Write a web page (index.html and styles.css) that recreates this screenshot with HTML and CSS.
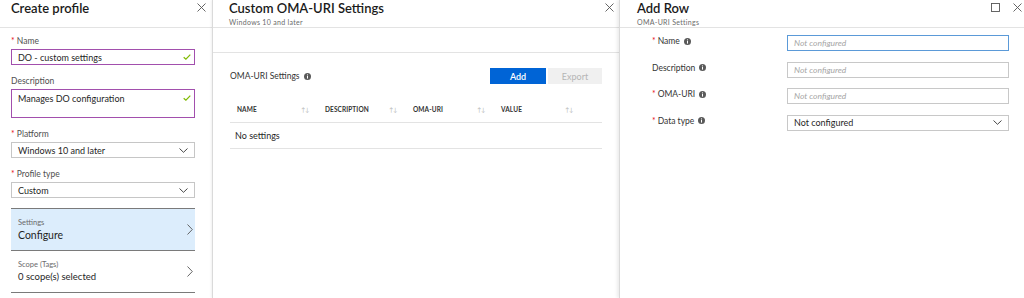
FILE: index.html
```html
<!DOCTYPE html>
<html lang="en">
<head>
<meta charset="utf-8">
<title>Create profile</title>
<link rel="stylesheet" href="styles.css">
</head>
<body>
<div class="app">

  <section class="blade blade-create">
    <header class="bhead">
      <div class="titles"><div class="btitle">Create profile</div></div>
      <div class="bicons">
        <svg class="ico" width="9" height="9" viewBox="0 0 9 9"><path d="M0.5 0.5L8.5 8.5M8.5 0.5L0.5 8.5" stroke="#555" stroke-width="0.9" fill="none"/></svg>
      </div>
    </header>
    <div class="cform">
      <div class="field">
        <div class="flabel"><span class="req">*</span> Name</div>
        <div class="inp inp-valid"><span class="val">DO - custom settings</span>
          <svg class="check" width="8" height="6" viewBox="0 0 8 6"><path d="M0.7 3.2L2.9 5.2L7.3 0.7" stroke="#7fba00" stroke-width="1.2" fill="none"/></svg>
        </div>
      </div>
      <div class="field">
        <div class="flabel">Description</div>
        <div class="inp inp-valid inp-area"><span class="val">Manages DO configuration</span>
          <svg class="check" width="8" height="6" viewBox="0 0 8 6"><path d="M0.7 3.2L2.9 5.2L7.3 0.7" stroke="#7fba00" stroke-width="1.2" fill="none"/></svg>
        </div>
      </div>
      <div class="field">
        <div class="flabel"><span class="req">*</span> Platform</div>
        <div class="inp sel"><span class="val">Windows 10 and later</span>
          <svg class="chev" width="9" height="5" viewBox="0 0 9 5"><path d="M0.5 0.5L4.5 4.3L8.5 0.5" stroke="#333" stroke-width="0.9" fill="none"/></svg>
        </div>
      </div>
      <div class="field">
        <div class="flabel"><span class="req">*</span> Profile type</div>
        <div class="inp sel"><span class="val">Custom</span>
          <svg class="chev" width="9" height="5" viewBox="0 0 9 5"><path d="M0.5 0.5L4.5 4.3L8.5 0.5" stroke="#333" stroke-width="0.9" fill="none"/></svg>
        </div>
      </div>
      <div class="cards">
        <div class="navcard active">
          <div class="navtext">
            <div class="navsub">Settings</div>
            <div class="navmain">Configure</div>
          </div>
          <svg class="navchev" width="6" height="11" viewBox="0 0 6 11"><path d="M0.5 0.5L5.3 5.5L0.5 10.5" stroke="#555" stroke-width="0.9" fill="none"/></svg>
        </div>
        <div class="navcard">
          <div class="navtext">
            <div class="navsub">Scope (Tags)</div>
            <div class="navmain navmain-s">0 scope(s) selected</div>
          </div>
          <svg class="navchev" width="6" height="11" viewBox="0 0 6 11"><path d="M0.5 0.5L5.3 5.5L0.5 10.5" stroke="#555" stroke-width="0.9" fill="none"/></svg>
        </div>
      </div>
    </div>
  </section>

  <section class="blade blade-oma">
    <header class="bhead bhead-mid">
      <div class="titles">
        <div class="btitle">Custom OMA-URI Settings</div>
        <div class="bsub">Windows 10 and later</div>
      </div>
      <div class="bicons">
        <svg class="ico" width="9" height="9" viewBox="0 0 9 9"><path d="M0.5 0.5L8.5 8.5M8.5 0.5L0.5 8.5" stroke="#555" stroke-width="0.9" fill="none"/></svg>
      </div>
    </header>
    <div class="toolbar"></div>
    <div class="omacontent">
      <div class="omarow">
        <div class="omalabel">OMA-URI Settings
          <svg class="info" width="7" height="7" viewBox="0 0 7 7"><circle cx="3.5" cy="3.5" r="3.5" fill="#5a5a5a"/><rect x="3" y="3" width="1" height="2.6" fill="#fff"/><rect x="3" y="1.4" width="1" height="1" fill="#fff"/></svg>
        </div>
        <div class="btns">
          <div class="btn btn-primary">Add</div>
          <div class="btn btn-disabled">Export</div>
        </div>
      </div>
      <div class="table">
        <div class="thead">
          <div class="th"><span>NAME</span><span class="sort">↑↓</span></div>
          <div class="th"><span>DESCRIPTION</span><span class="sort">↑↓</span></div>
          <div class="th"><span>OMA-URI</span><span class="sort">↑↓</span></div>
          <div class="th"><span>VALUE</span><span class="sort">↑↓</span></div>
        </div>
        <div class="trow">No settings</div>
      </div>
    </div>
  </section>

  <section class="blade blade-add">
    <header class="bhead bhead-add">
      <div class="titles">
        <div class="btitle">Add Row</div>
        <div class="bsub">OMA-URI Settings</div>
      </div>
      <div class="bicons bicons-2">
        <svg class="ico" width="9" height="9" viewBox="0 0 9 9"><rect x="0.5" y="0.5" width="8" height="8" stroke="#555" stroke-width="0.9" fill="none"/></svg>
        <svg class="ico" width="9" height="9" viewBox="0 0 9 9"><path d="M0.5 0.5L8.5 8.5M8.5 0.5L0.5 8.5" stroke="#555" stroke-width="0.9" fill="none"/></svg>
      </div>
    </header>
    <div class="rform">
      <div class="rlabel"><span class="req">*</span> Name
        <svg class="info" width="7" height="7" viewBox="0 0 7 7"><circle cx="3.5" cy="3.5" r="3.5" fill="#5a5a5a"/><rect x="3" y="3" width="1" height="2.6" fill="#fff"/><rect x="3" y="1.4" width="1" height="1" fill="#fff"/></svg>
      </div>
      <div class="rinp rinp-focus"><span class="ph">Not configured</span></div>

      <div class="rlabel">Description
        <svg class="info" width="7" height="7" viewBox="0 0 7 7"><circle cx="3.5" cy="3.5" r="3.5" fill="#5a5a5a"/><rect x="3" y="3" width="1" height="2.6" fill="#fff"/><rect x="3" y="1.4" width="1" height="1" fill="#fff"/></svg>
      </div>
      <div class="rinp"><span class="ph">Not configured</span></div>

      <div class="rlabel"><span class="req">*</span> OMA-URI
        <svg class="info" width="7" height="7" viewBox="0 0 7 7"><circle cx="3.5" cy="3.5" r="3.5" fill="#5a5a5a"/><rect x="3" y="3" width="1" height="2.6" fill="#fff"/><rect x="3" y="1.4" width="1" height="1" fill="#fff"/></svg>
      </div>
      <div class="rinp"><span class="ph">Not configured</span></div>

      <div class="rlabel"><span class="req">*</span> Data type
        <svg class="info" width="7" height="7" viewBox="0 0 7 7"><circle cx="3.5" cy="3.5" r="3.5" fill="#5a5a5a"/><rect x="3" y="3" width="1" height="2.6" fill="#fff"/><rect x="3" y="1.4" width="1" height="1" fill="#fff"/></svg>
      </div>
      <div class="rinp rsel"><span class="rval">Not configured</span>
        <svg class="chev" width="9" height="5" viewBox="0 0 9 5"><path d="M0.5 0.5L4.5 4.3L8.5 0.5" stroke="#333" stroke-width="0.9" fill="none"/></svg>
      </div>
    </div>
  </section>

</div>
</body>
</html>
```

FILE: styles.css
```css
* { box-sizing: border-box; }
html, body { margin: 0; padding: 0; background: #fff; }
body {
  width: 1024px;
  height: 298px;
  overflow: hidden;
  font-family: Lato, "Open Sans", sans-serif;
  color: #1f1f1f;
}
.app {
  display: flex;
  height: 298px;
}
.blade {
  height: 298px;
  background: #fff;
  position: relative;
}
.blade-create { width: 212px; flex: none; }
.blade-oma {
  width: 407px;
  flex: none;
  border-left: 1px solid #dadada;
  box-shadow: -1px 0 2px rgba(0,0,0,0.06);
}
.blade-add {
  flex: 1;
  border-left: 1px solid #dadada;
  box-shadow: -2px 0 3px rgba(0,0,0,0.08);
}

/* headers */
.bhead {
  height: 28px;
  border-bottom: 1px solid #e3e3e3;
  display: flex;
  justify-content: space-between;
  align-items: flex-start;
  padding: 0 6px 0 11px;
}
.bhead.bhead-mid { padding: 0 5px 0 16px; }
.bhead.bhead-add { padding: 0 2px 0 17px; }
.titles { margin: 0; padding: 0; flex: none; }
.btitle {
  margin: 0;
  font-size: 13px;
  line-height: 16px;
  font-weight: 600;
  color: #1b1b1b;
  white-space: nowrap;
}
.bsub {
  font-size: 7px;
  line-height: 8px;
  letter-spacing: 0.3px;
  color: #6b6b6b;
  margin-top: 1.5px;
  white-space: nowrap;
}
.bicons {
  display: flex;
  gap: 13px;
  padding-top: 3px;
}
.ico { display: block; }

/* left form */
.cform {
  padding: 7px 0 0 11px;
  width: 195px;
}
.field { margin-bottom: 10px; }
.flabel {
  font-size: 8.5px;
  line-height: 12px;
  color: #505050;
  margin-bottom: 2px;
}
.req { color: #e81123; }
.inp {
  height: 16px;
  border: 1px solid #c6c6c6;
  display: flex;
  align-items: center;
  justify-content: space-between;
  padding: 0 3px 0 6px;
  font-size: 9px;
  color: #1f1f1f;
  background: #fff;
}
.inp-valid { border-color: #a24fad; }
.inp-area {
  height: 29px;
  align-items: flex-start;
  padding-top: 3px;
}
.inp-area .check { margin-top: 2px; }
.val { white-space: nowrap; }
.sel { padding-right: 6px; }
.check { display: block; }
.chev { display: block; }

/* nav cards */
.cards { margin-top: 0; }
.navcard {
  height: 42px;
  border-top: 1px solid #7a7a7a;
  display: flex;
  align-items: center;
  justify-content: space-between;
  padding: 0 2px 0 7px;
}
.navcard:last-child {
  border-bottom: 1px solid #7a7a7a;
  height: 43px;
}
.navcard.active { background: #dcedfc; }
.navsub {
  font-size: 7.5px;
  line-height: 10px;
  color: #6b6b6b;
}
.navmain {
  font-size: 10.5px;
  line-height: 14px;
  color: #1f1f1f;
}
.navmain-s { font-size: 9.5px; }
.navchev { display: block; }

/* middle blade */
.toolbar {
  height: 25px;
  border-bottom: 1px solid #e3e3e3;
}
.omacontent {
  padding: 15px 17px 0 17px;
}
.omarow {
  display: flex;
  justify-content: space-between;
  align-items: center;
  height: 16px;
}
.omalabel {
  font-size: 8.5px;
  color: #333;
  display: flex;
  align-items: center;
  gap: 4px;
}
.info { display: inline-block; vertical-align: middle; }
.btns { display: flex; gap: 2px; }
.btn {
  height: 16px;
  display: flex;
  align-items: center;
  justify-content: center;
  font-size: 9px;
}
.btn-primary {
  width: 56px;
  background: #0064d6;
  color: #fff;
  font-weight: 600;
}
.btn-disabled {
  width: 54px;
  background: #f0f0f0;
  color: #b5b5b5;
}
.table { margin-top: 12px; }
.thead {
  display: grid;
  grid-template-columns: repeat(4, 88px);
  height: 27px;
  border-bottom: 1px solid #e3e3e3;
  align-items: center;
}
.th {
  display: flex;
  justify-content: space-between;
  align-items: center;
  padding: 0 9px 0 7px;
  font-size: 6.5px;
  font-weight: 700;
  color: #333;
  letter-spacing: 0.1px;
}
.sort {
  font-size: 6px;
  font-weight: 400;
  color: #b8b8b8;
  letter-spacing: -0.5px;
}
.trow {
  height: 26px;
  border-bottom: 1px solid #e3e3e3;
  display: flex;
  align-items: center;
  padding-left: 5px;
  font-size: 9px;
  color: #1f1f1f;
}

/* right blade */
.rform {
  display: grid;
  grid-template-columns: 135px 222px;
  row-gap: 10.5px;
  padding: 7px 0 0 32px;
}
.rlabel {
  font-size: 8.5px;
  line-height: 12px;
  color: #333;
  display: flex;
  align-items: center;
  gap: 4px;
  height: 16px;
  align-self: start;
  padding-bottom: 4px;
}
.rlabel .req { margin-right: -2px; }
.rinp {
  height: 16px;
  border: 1px solid #c8c8c8;
  display: flex;
  align-items: center;
  justify-content: space-between;
  padding: 0 6px 0 6px;
}
.rinp-focus { border-color: #5b9ad8; }
.ph {
  font-size: 8.5px;
  font-style: italic;
  color: #a6a6a6;
}
.rval {
  font-size: 9px;
  color: #1f1f1f;
}
```
